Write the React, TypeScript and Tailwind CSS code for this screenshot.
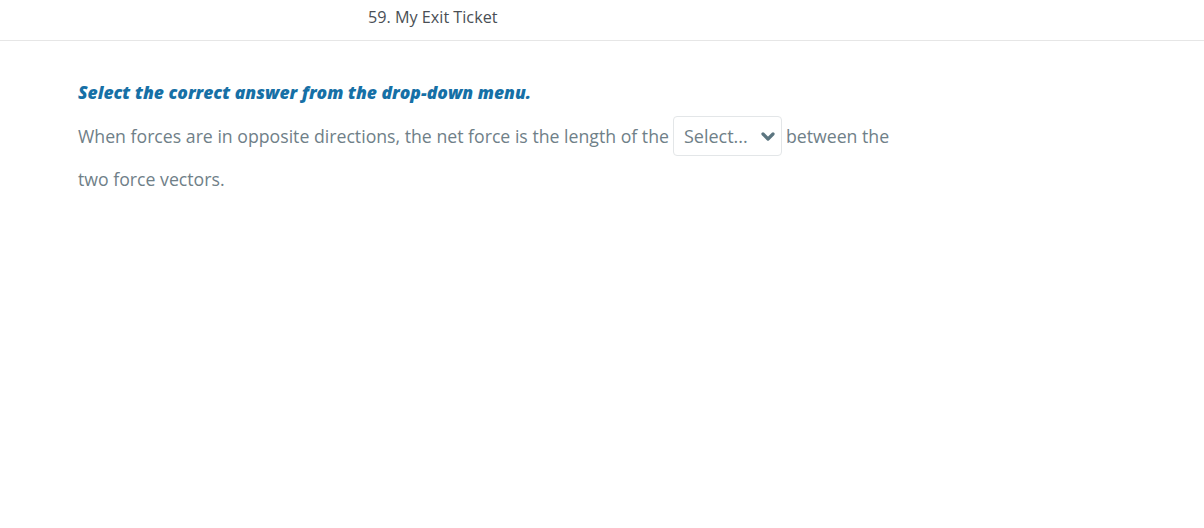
function Dropdown() {
  return (
    <button
      type="button"
      className="mx-[4px] flex h-[40px] w-[109px] items-center justify-between rounded-[4px] border border-[#e3e6e8] bg-white pl-[10px] pr-[6px] text-[18px] text-[#6f8088]"
    >
      <span>Select...</span>
      <svg width="14" height="10" viewBox="0 0 14 10" className="mt-[2px]">
        <polyline
          points="2,2 7,7 12,2"
          fill="none"
          stroke="#5b7580"
          strokeWidth="3.2"
          strokeLinecap="round"
          strokeLinejoin="round"
        />
      </svg>
    </button>
  );
}

export default function App() {
  return (
    <div className="min-h-[528px] w-full bg-white font-['Open_Sans',sans-serif]">
      <header className="h-[41px] border-b border-[#e6e6e6] pl-[368px] pt-[5px]">
        <span className="text-[16.2px] text-[#4a4f55]">59. My Exit Ticket</span>
      </header>

      <main className="pl-[78px] pt-[39px]">
        <p className="text-[17.5px] font-extrabold italic leading-[24px] text-[#1670a6]">
          Select the correct answer from the drop-down menu.
        </p>
        <div className="mt-[12px] text-[17.7px] text-[#6f8088]">
          <div className="flex h-[40px] items-center">
            <span>When forces are in opposite directions, the net force is the length of the</span>
            <Dropdown />
            <span>between the</span>
          </div>
          <div className="mt-[11px] leading-[24px]">two force vectors.</div>
        </div>
      </main>
    </div>
  );
}
